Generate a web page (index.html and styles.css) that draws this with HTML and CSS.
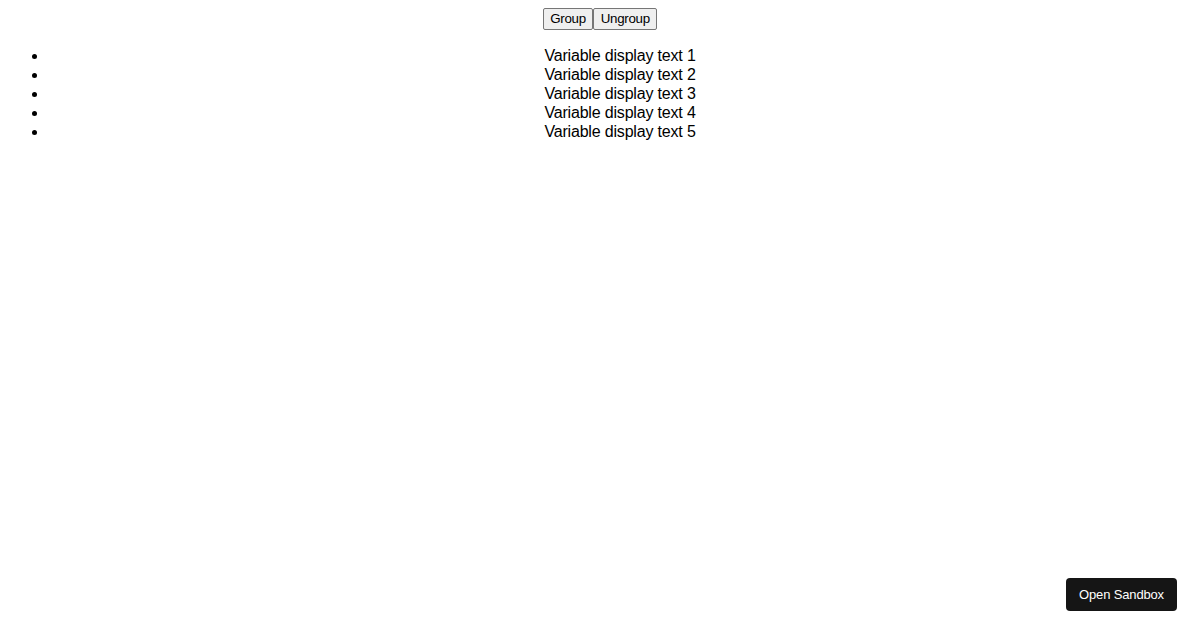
FILE: index.html
```html
<!DOCTYPE html>
<html>
<head>
<meta charset="utf-8">
<link rel="stylesheet" href="styles.css">
</head>
<body>
<div class="app">
  <button class="btn">Group</button><button class="btn">Ungroup</button>
  <ul class="list">
    <li>Variable display text 1</li>
    <li>Variable display text 2</li>
    <li>Variable display text 3</li>
    <li>Variable display text 4</li>
    <li>Variable display text 5</li>
  </ul>
</div>
<a class="open-sandbox">Open Sandbox</a>
</body>
</html>
```
FILE: styles.css
```css
body {
  margin: 8px;
  font-family: "Liberation Sans", Arial, sans-serif;
  font-size: 16px;
  color: #000;
  background: #fff;
}
.app {
  text-align: center;
}
.btn {
  font-family: "Liberation Sans", Arial, sans-serif;
  font-size: 13.333px;
  letter-spacing: -0.3px;
  height: 22px;
  margin: 0;
  padding: 0 6.5px 2px;
  background: #efefef;
  color: #000;
  border: 1px solid #767676;
  border-radius: 2px;
  vertical-align: top;
}
.list {
  margin: 16px 0;
  padding-left: 40px;
  line-height: 19px;
  letter-spacing: -0.18px;
}
.open-sandbox {
  position: fixed;
  right: 23px;
  bottom: 19px;
  width: 111px;
  height: 33px;
  box-sizing: border-box;
  display: flex;
  align-items: center;
  justify-content: center;
  background: #151515;
  color: #fff;
  border-radius: 4px;
  font-size: 13px;
  letter-spacing: -0.15px;
  font-family: "Liberation Sans", Arial, sans-serif;
}
```
